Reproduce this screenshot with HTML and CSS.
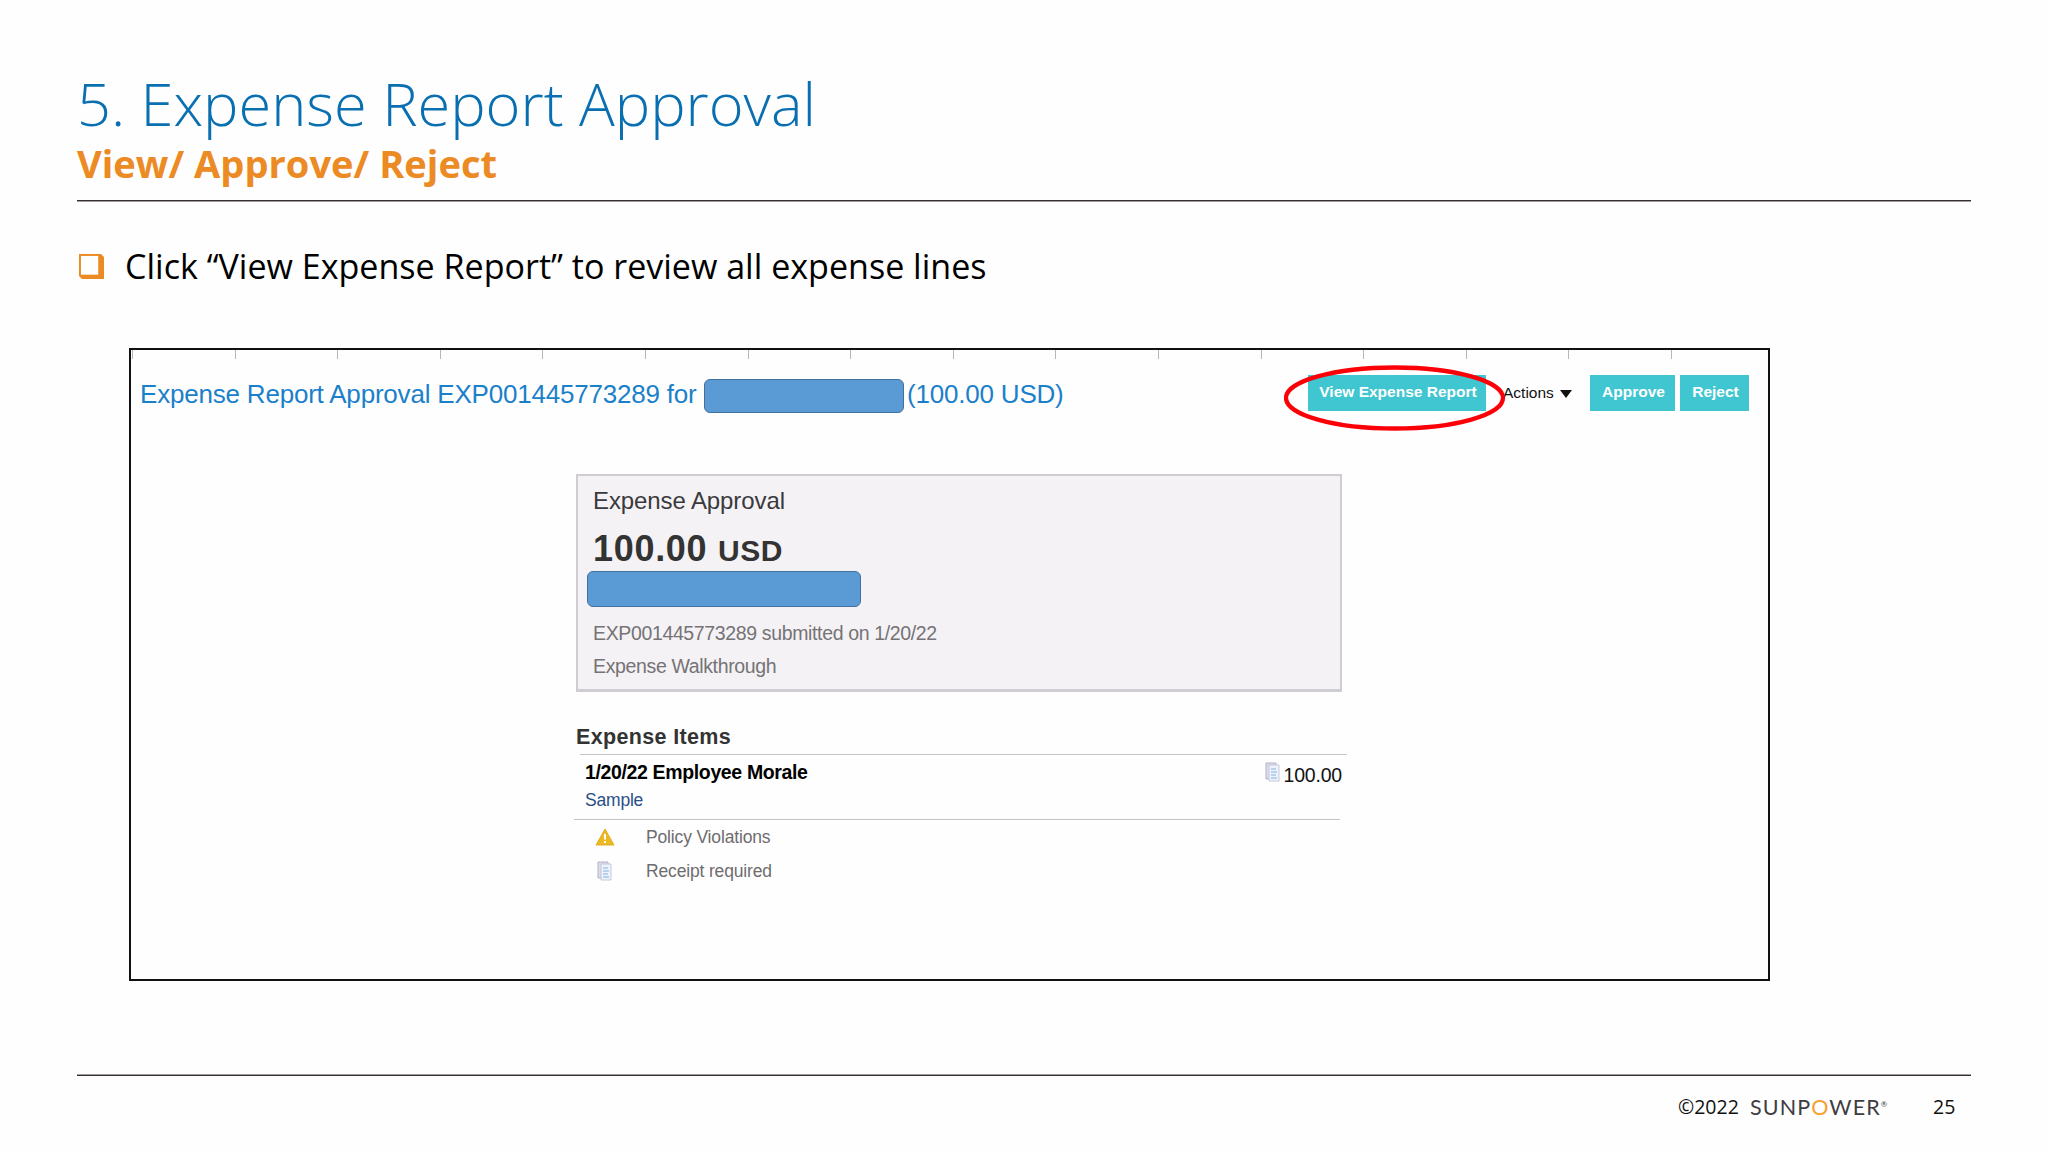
FILE: index.html
```html
<!DOCTYPE html>
<html lang="en">
<head>
	<meta charset="utf-8">
	<meta name="viewport" content="width=device-width, initial-scale=1">
	<title>Expense Report Approval</title>
	<link rel="stylesheet" href="styles.css">
</head>
<body>
	<div class="slide">
		<header class="slide-header">
			<h1>5. Expense Report Approval</h1>
			<h2>View/ Approve/ Reject</h2>
		</header>

		<div class="bullet">
			<svg class="bullet-box" viewBox="0 0 26 26">
				<path d="M0 0H23L26 3V26H3L0 23Z" fill="#ec8a24"/>
				<path d="M2 2H20V21.500H2Z" fill="#fff"/>
			</svg>
			<p>Click “View Expense Report” to review all expense lines</p>
		</div>

		<div class="frame">
			<div class="ruler">
				<i></i><i></i><i></i><i></i><i></i><i></i><i></i><i></i>
				<i></i><i></i><i></i><i></i><i></i><i></i><i></i><i></i>
			</div>
			<div class="toolbar">
				<p class="report-title">Expense Report Approval EXP001445773289 for</p>
				<div class="redacted name"></div>
				<p class="report-title amount">(100.00 USD)</p>
				<div class="view-wrap">
					<button class="btn view">View Expense Report</button>
					<svg class="circle" viewBox="0 0 222 66">
						<ellipse cx="110.500" cy="33" rx="108.500" ry="30.500" fill="none" stroke="#fb0007" stroke-width="4.300"/>
					</svg>
				</div>
				<p class="actions">Actions</p>
				<svg class="caret" viewBox="0 0 12 8"><path d="M0 0H12L6 8Z" fill="#111"/></svg>
				<button class="btn approve">Approve</button>
				<button class="btn reject">Reject</button>
			</div>

			<div class="card">
				<p class="card-title">Expense Approval</p>
				<p class="total">100.00 <small>USD</small></p>
				<div class="redacted person"></div>
				<p class="detail submitted">EXP001445773289 submitted on 1/20/22</p>
				<p class="detail purpose">Expense Walkthrough</p>
			</div>

			<h3>Expense Items</h3>
			<div class="item">
				<div>
					<p class="item-name">1/20/22 Employee Morale</p>
					<a class="item-link">Sample</a>
				</div>
				<div class="item-amount">
					<svg class="doc" viewBox="0 0 15 20">
						<path d="M1 1H11V17H1Z" fill="#dcdce8" stroke="#b3b2c8"/>
						<path d="M4 3H14V19H4Z" fill="#eef2fb" stroke="#c6c8d8"/>
						<path d="M6 7H11M6 10H12M6 13H11M6 16H12" stroke="#a5c8ec" stroke-width="1.300"/>
					</svg>
					<span>100.00</span>
				</div>
			</div>
			<div class="note">
				<svg class="warn" viewBox="0 0 20 18">
					<path d="M10 1L19 17H1Z" fill="#ecb920" stroke="#e3ad25" stroke-linejoin="round"/>
					<path d="M10 6V11.500M10 13V15" stroke="#fff" stroke-width="2"/>
				</svg>
				<p>Policy Violations</p>
			</div>
			<div class="note receipt">
				<svg class="doc" viewBox="0 0 15 20">
					<path d="M1 1H11V17H1Z" fill="#dcdce8" stroke="#b3b2c8"/>
					<path d="M4 3H14V19H4Z" fill="#eef2fb" stroke="#c6c8d8"/>
					<path d="M6 7H11M6 10H12M6 13H11M6 16H12" stroke="#a5c8ec" stroke-width="1.300"/>
				</svg>
				<p>Receipt required</p>
			</div>
		</div>

		<footer>
			<p class="copyright">©2022</p>
			<p class="logo">SUNP<b>O</b>WER<sup>®</sup></p>
			<p class="page">25</p>
		</footer>
	</div>
</body>
</html>
```
FILE: styles.css
```css
*{
	padding: 0;
	margin: 0;
	box-sizing: border-box;
}
body{
	background: #fefefe;
	font-family: "Liberation Sans",Arial,sans-serif;
	white-space: nowrap;
}
.slide{
	width: 2048px;
	height: 1152px;
	padding: 71px 77px 0;
	display: flex;
	flex-direction: column;
	overflow: hidden;
}
.slide-header{
	height: 130px;
	border-bottom: 1px solid #352e34;
	box-shadow: 0 1px 0 #a09ca0;
	font-family: "Open Sans",sans-serif;
}
h1{
	font-size: 59.5px;
	line-height: 64px;
	font-weight: 300;
	color: #0a6fb0;
}
h2{
	margin-top: 6px;
	font-size: 38.1px;
	line-height: 44px;
	font-weight: 700;
	color: #ec8a24;
}
.bullet{
	margin-top: 43px;
	display: flex;
	align-items: center;
	padding-left: 2px;
	height: 44px;
	font-family: "Open Sans",sans-serif;
	font-size: 34.05px;
	line-height: 44px;
	color: #000;
}
.bullet-box{
	width: 25px;
	height: 25px;
	margin-right: 21px;
}
.frame{
	width: 1641px;
	height: 633px;
	margin: 60px 0 0 52px;
	border: 2px solid #111;
}
.ruler{
	display: flex;
	height: 9px;
	padding-left: 1px;
}
.ruler i{
	width: 102.6px;
	border-left: 1px solid #bbb5bb;
	flex: none;
}
.toolbar{
	display: flex;
	height: 36px;
	margin-top: 16px;
	padding-left: 9px;
}
.report-title{
	width: 564px;
	font-size: 26px;
	line-height: 39px;
	letter-spacing: -0.2px;
	color: #1b80ca;
}
.redacted{
	background: #5b9bd5;
	border: 1.5px solid #41719c;
	border-radius: 6px;
}
.name{
	width: 200px;
	height: 34px;
	margin-top: 4px;
}
.amount{
	width: 404px;
	padding-left: 3px;
}
.view-wrap{
	position: relative;
	margin-right: 17px;
}
.btn{
	height: 36px;
	padding: 0 0 2px 2px;
	border: none;
	background: #40c6d0;
	color: #fff;
	font-family: inherit;
	font-size: 15.5px;
	font-weight: 700;
	line-height: 34px;
}
.view{
	width: 178px;
}
.circle{
	position: absolute;
	left: -24px;
	top: -10px;
	width: 222px;
	height: 66px;
}
.actions{
	width: 50px;
	font-size: 15.5px;
	line-height: 36px;
	color: #111;
}
.caret{
	width: 12px;
	height: 8px;
	margin: 15px 18px 0 7px;
}
.approve{
	width: 85px;
	margin-right: 5px;
}
.reject{
	width: 69px;
}
.card{
	width: 766px;
	height: 218px;
	margin: 63px 0 0 445px;
	padding: 10px 0 0 15px;
	background: #f4f2f5;
	border: 2px solid #cfcdd1;
	border-bottom-width: 3px;
}
.card-title{
	font-size: 24px;
	line-height: 30px;
	letter-spacing: -0.1px;
	color: #3a3a3e;
}
.total{
	margin-top: 13px;
	font-size: 36px;
	line-height: 40px;
	font-weight: 700;
	letter-spacing: 0.7px;
	color: #333;
}
.total small{
	font-size: 30px;
	letter-spacing: 0.5px;
}
.person{
	width: 274px;
	height: 36px;
	margin: 0 0 0 -6px;
}
.detail{
	font-size: 19.5px;
	line-height: 24px;
	letter-spacing: -0.36px;
	color: #757375;
}
.submitted{
	margin-top: 14px;
}
.purpose{
	margin-top: 9px;
}
h3{
	margin: 32px 0 0 445px;
	font-size: 21.5px;
	line-height: 26px;
	letter-spacing: 0.35px;
	color: #333;
}
.item{
	display: flex;
	justify-content: space-between;
	width: 767px;
	height: 65px;
	margin: 4px 0 0 449px;
	padding: 4px 5px 0;
	border-top: 1px solid #c5c3c7;
}
.item-name{
	font-size: 19.5px;
	line-height: 26px;
	letter-spacing: -0.36px;
	font-weight: 700;
	color: #000;
}
.item-link{
	display: block;
	font-size: 17.5px;
	line-height: 30px;
	letter-spacing: -0.2px;
	color: #2a4f86;
}
.item-amount{
	display: flex;
	font-size: 19.5px;
	line-height: 32px;
	letter-spacing: -0.2px;
	color: #111;
}
.doc{
	width: 15px;
	height: 20px;
}
.item-amount .doc{
	margin: 3px 4px 0 0;
}
.note{
	display: flex;
	align-items: center;
	width: 766px;
	height: 34px;
	margin-left: 443px;
	padding-left: 21px;
	border-top: 1px solid #c5c3c7;
	font-size: 17.5px;
	line-height: 34px;
	letter-spacing: -0.16px;
	color: #6e6c6e;
}
.warn{
	width: 20px;
	height: 18px;
	margin-right: 31px;
}
.receipt{
	height: 36px;
	border: none;
	padding-left: 23px;
}
.receipt .doc{
	margin-right: 34px;
}
footer{
	display: flex;
	height: 60px;
	margin-top: 94px;
	padding-left: 1601px;
	border-top: 1px solid #352e34;
	box-shadow: 0 -1px 0 #a09ca0;
	font-family: "Open Sans",sans-serif;
	font-size: 19.5px;
	line-height: 62px;
	color: #111;
}
.copyright{
	width: 72px;
}
.logo{
	width: 183px;
	font-family: Lato,sans-serif;
	font-size: 21.5px;
	letter-spacing: 1.1px;
	color: #3f3d42;
}
.logo b{
	font-weight: 400;
	color: #f6a02d;
}
.logo sup{
	font-size: 8px;
	line-height: 0;
}
```
